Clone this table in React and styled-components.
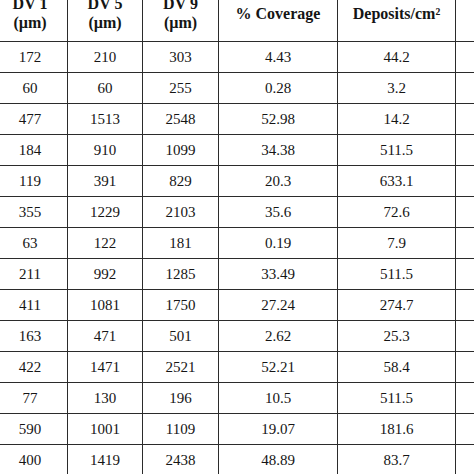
import React from "react";
import styled, { createGlobalStyle } from "styled-components";

const Global = createGlobalStyle`
    body {
        margin:0;
        background:#fff;
        overflow:hidden;
    }
`;

const Wrap = styled.div`
    width:474px;
    height:474px;
    overflow:hidden;
    background:#fff;
`;

const Table = styled.table`
    margin:-15px 0 0 -8px;
    width:538px;
    border-collapse:collapse;
    table-layout:fixed;
    font-family:"Liberation Serif", "Times New Roman", serif;
    color:#151515;
`;

const Col = styled.col`
    width:${p => p.w}px;
`;

const Th = styled.th`
    height:54px;
    padding:0 0 1px;
    border:1.5px solid #2b2b2b;
    font-size:16px;
    font-weight:700;
    line-height:19px;
    text-align:center;
    vertical-align:middle;
`;

const Td = styled.td`
    height:30px;
    padding:0;
    border:1.5px solid #2b2b2b;
    font-size:15px;
    text-align:center;
    vertical-align:middle;
`;

const cols = [
    { w: 75, label: <>DV 1<br />(µm)</> },
    { w: 75, label: <>DV 5<br />(µm)</> },
    { w: 76, label: <>DV 9<br />(µm)</> },
    { w: 119, label: "% Coverage" },
    { w: 118, label: <>Deposits/cm²</> },
    { w: 75, label: "" },
];

const rows = [
    ["172", "210", "303", "4.43", "44.2"],
    ["60", "60", "255", "0.28", "3.2"],
    ["477", "1513", "2548", "52.98", "14.2"],
    ["184", "910", "1099", "34.38", "511.5"],
    ["119", "391", "829", "20.3", "633.1"],
    ["355", "1229", "2103", "35.6", "72.6"],
    ["63", "122", "181", "0.19", "7.9"],
    ["211", "992", "1285", "33.49", "511.5"],
    ["411", "1081", "1750", "27.24", "274.7"],
    ["163", "471", "501", "2.62", "25.3"],
    ["422", "1471", "2521", "52.21", "58.4"],
    ["77", "130", "196", "10.5", "511.5"],
    ["590", "1001", "1109", "19.07", "181.6"],
    ["400", "1419", "2438", "48.89", "83.7"],
];

const App = () => {
    return (
        <Wrap>
            <Global />
            <Table>
                <colgroup>
                    {cols.map((c, i) => (
                        <Col key={i} w={c.w} />
                    ))}
                </colgroup>
                <thead>
                    <tr>
                        {cols.map((c, i) => (
                            <Th key={i}>{c.label}</Th>
                        ))}
                    </tr>
                </thead>
                <tbody>
                    {rows.map((r, i) => (
                        <tr key={i}>
                            {r.map((v, j) => (
                                <Td key={j}>{v}</Td>
                            ))}
                            <Td />
                        </tr>
                    ))}
                </tbody>
            </Table>
        </Wrap>
    );
};

export default App;
